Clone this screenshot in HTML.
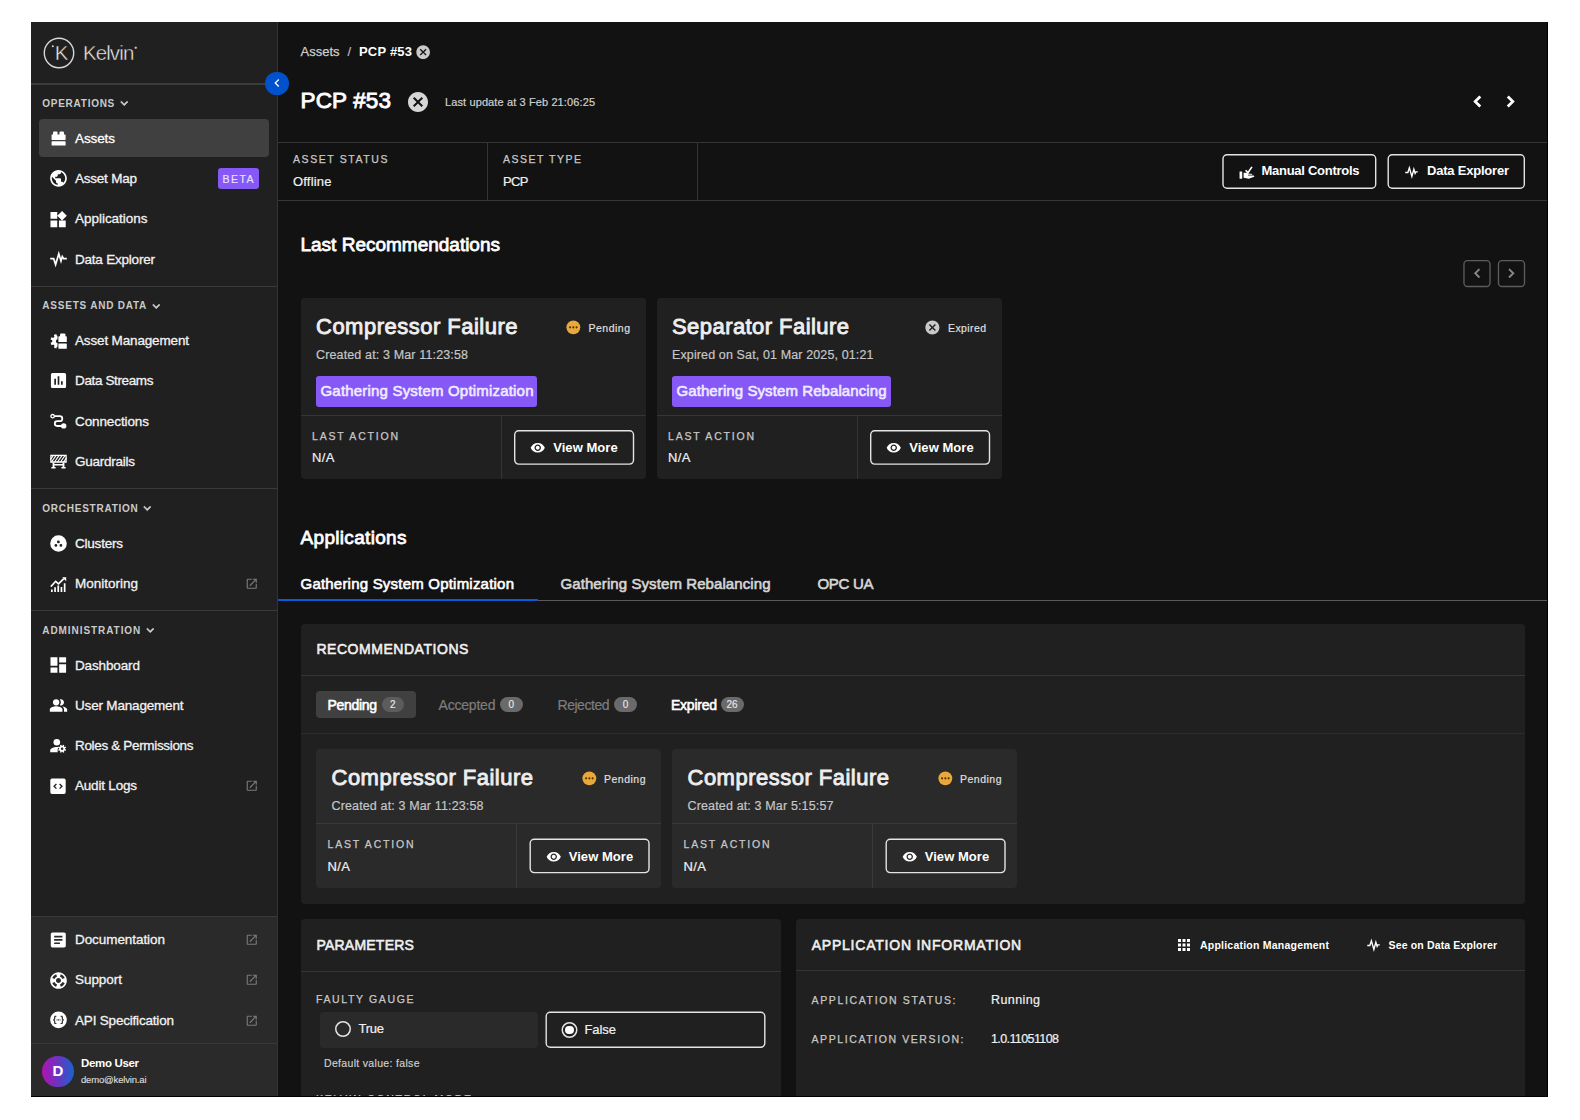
<!DOCTYPE html>
<html lang="en"><head><meta charset="utf-8"><title>PCP #53 - Kelvin</title><style>
html,body{margin:0;padding:0;background:#fff;}
body{width:1580px;height:1120px;overflow:hidden;position:relative;font-family:"Liberation Sans",sans-serif;}
#frame{position:absolute;left:31px;top:22px;width:1517px;height:1075px;background:#121212;overflow:hidden;}
.t{position:absolute;white-space:nowrap;display:block;}
.b{position:absolute;}
.i{position:absolute;display:block;overflow:visible;}
</style></head><body><div id="frame">
<div class="b" style="left:0.00px;top:0.00px;width:246.00px;height:1075.00px;background:#202020;"></div>
<div class="b" style="left:246.00px;top:0.00px;width:1.00px;height:1075.00px;background:#333;"></div>
<div class="b" style="left:0.00px;top:894.00px;width:246.00px;height:181.00px;background:#2a2a2a;"></div>
<div class="b" style="left:0.00px;top:894.00px;width:246.00px;height:1.00px;background:#3a3a3a;"></div>
<div class="b" style="left:0.00px;top:1021.00px;width:246.00px;height:1.00px;background:#3a3a3a;"></div>
<svg class="i" style="left:11px;top:14px;width:34px;height:34px" viewBox="0 0 34 34"><circle cx="17" cy="17" r="14.700" fill="none" stroke="#d8d8d8" stroke-width="1.400"/><circle cx="10.800" cy="10.200" r="1" fill="#d8d8d8"/><text x="12.700" y="24.200" font-size="20.500" fill="#ececec" stroke="#202020" stroke-width="0.450" font-family="Liberation Sans, sans-serif">K</text></svg>
<span class="t" id="t1" style="left:51.90px;top:17.70px;font-size:20.5px;line-height:26px;font-weight:400;color:#ececec;letter-spacing:-0.889px;-webkit-text-stroke:0.450px #202020;">Kelvin</span>
<span class="t" style="left:103px;top:22px;font-size:5px;line-height:6px;color:#ccc">&#9679;</span>
<div class="b" style="left:0.00px;top:60.50px;width:246.00px;height:2.00px;background:#3c3c3c;"></div>
<div class="b" style="left:234.30px;top:49.70px;width:23.40px;height:23.40px;background:#0052cc;border-radius:50%;z-index:5"></div>
<svg class="i" style="left:237.50px;top:53.40px;width:16.00px;height:16.00px;color:#fff;z-index:6" viewBox="0 0 24 24" fill="currentColor"><path d="M15.41 7.41L14 6l-6 6 6 6 1.41-1.41L10.83 12z" /></svg>
<span class="t" id="t2" style="left:11.30px;top:74.90px;font-size:10px;line-height:14px;font-weight:700;color:#cacaca;letter-spacing:0.734px;">OPERATIONS</span>
<svg class="i" style="left:85.95px;top:74.45px;width:14.50px;height:14.50px;color:#d0d0d0;stroke:#d0d0d0;stroke-width:1.1px;" viewBox="0 0 24 24" fill="currentColor"><path d="M16.59 8.59L12 13.17 7.41 8.59 6 10l6 6 6-6z" /></svg>
<div class="b" style="left:7.50px;top:97.00px;width:230.50px;height:38.00px;background:#404040;border-radius:4px"></div>
<svg class="i" style="left:18.50px;top:107.50px;width:17px;height:17px;color:#fff;" viewBox="0 0 17 17" fill="currentColor"><rect x="3" y="1.500" width="4.500" height="4.500" rx="1.100"/><rect x="9.500" y="1.500" width="4.500" height="4.500" rx="1.100"/><rect x="1.600" y="4.400" width="14" height="5.500" rx="0.600"/><rect x="1.600" y="11.300" width="14" height="4.200" rx="0.600"/></svg>
<span class="t" id="t3" style="left:44.00px;top:107.00px;font-size:13.5px;line-height:20px;font-weight:400;color:#fff;letter-spacing:-0.103px;-webkit-text-stroke:0.300px #fff;">Assets</span>
<svg class="i" style="left:18.50px;top:148.00px;width:17px;height:17px;color:#fff;" viewBox="0 0 17 17" fill="currentColor"><g transform="translate(-1.500,-1.700) scale(0.8333)"><path d="M12 2C6.48 2 2 6.48 2 12s4.48 10 10 10 10-4.48 10-10S17.52 2 12 2zm-1 17.93c-3.95-.49-7-3.85-7-7.93 0-.62.08-1.21.21-1.79L9 15v1c0 1.1.9 2 2 2v1.93zm6.9-2.54c-.26-.81-1-1.39-1.9-1.39h-1v-3c0-.55-.45-1-1-1H8v-2h2c.55 0 1-.45 1-1V7h2c1.1 0 2-.9 2-2v-.41c2.93 1.19 5 4.06 5 7.41 0 2.08-.8 3.97-2.1 5.39z" /></g></svg>
<span class="t" id="t4" style="left:44.00px;top:146.90px;font-size:13.5px;line-height:20px;font-weight:400;color:#f2f2f2;letter-spacing:-0.223px;-webkit-text-stroke:0.300px #f2f2f2;">Asset Map</span>
<div class="b" style="left:187.00px;top:145.50px;width:41.00px;height:21.50px;background:#8659f7;border-radius:3px"></div>
<span class="t" id="t5" style="left:191.50px;top:149.50px;font-size:10.5px;line-height:14px;font-weight:400;color:#e9e0ff;letter-spacing:1.448px;-webkit-text-stroke:0.16px #e9e0ff;">BETA</span>
<svg class="i" style="left:18.50px;top:188.50px;width:17px;height:17px;color:#fff;" viewBox="0 0 17 17" fill="currentColor"><g transform="translate(-2.050,-1.550) scale(0.8458)"><path d="M13 13v8h8v-8h-8zM3 21h8v-8H3v8zM3 3v8h8V3H3zm13.66-1.31L11 7.34 16.66 13l5.66-5.66-5.66-5.65z" /></g></svg>
<span class="t" id="t6" style="left:44.00px;top:187.40px;font-size:13.5px;line-height:20px;font-weight:400;color:#f2f2f2;letter-spacing:-0.027px;-webkit-text-stroke:0.300px #f2f2f2;">Applications</span>
<svg class="i" style="left:18.50px;top:229.00px;width:17px;height:17px;color:#fff;" viewBox="0 0 17 17" fill="currentColor"><path d="M0.200 7.700H3.700L5.600 13.600 8.800 2.800 11 10 12.300 5.600 13.600 7.700H16.800" fill="none" stroke="currentColor" stroke-width="1.700" stroke-linejoin="miter" stroke-miterlimit="6"/></svg>
<span class="t" id="t7" style="left:44.00px;top:227.90px;font-size:13.5px;line-height:20px;font-weight:400;color:#f2f2f2;letter-spacing:-0.212px;-webkit-text-stroke:0.300px #f2f2f2;">Data Explorer</span>
<div class="b" style="left:0.00px;top:264.00px;width:246.00px;height:1.00px;background:#3a3a3a;"></div>
<span class="t" id="t8" style="left:11.30px;top:277.40px;font-size:10px;line-height:14px;font-weight:700;color:#cacaca;letter-spacing:0.775px;">ASSETS AND DATA</span>
<svg class="i" style="left:117.95px;top:276.95px;width:14.50px;height:14.50px;color:#d0d0d0;stroke:#d0d0d0;stroke-width:1.1px;" viewBox="0 0 24 24" fill="currentColor"><path d="M16.59 8.59L12 13.17 7.41 8.59 6 10l6 6 6-6z" /></svg>
<svg class="i" style="left:18.50px;top:310.50px;width:17px;height:17px;color:#fff;" viewBox="0 0 17 17" fill="currentColor"><clipPath id="cg"><rect x="0" y="0" width="7.500" height="17"/></clipPath><path clip-path="url(#cg)" fill-rule="evenodd" d="M15.03 9.79 L14.06 12.15 L12.34 11.48 L11.10 12.72 L11.78 14.44 L9.43 15.42 L8.69 13.73 L6.94 13.73 L6.21 15.43 L3.85 14.46 L4.52 12.74 L3.28 11.50 L1.56 12.18 L0.58 9.83 L2.27 9.09 L2.27 7.34 L0.57 6.61 L1.54 4.25 L3.26 4.92 L4.50 3.68 L3.82 1.96 L6.17 0.98 L6.91 2.67 L8.66 2.67 L9.39 0.97 L11.75 1.94 L11.08 3.66 L12.32 4.90 L14.04 4.22 L15.02 6.57 L13.33 7.31 L13.33 9.06Z M5.90 8.20 a1.90 1.90 0 1 0 3.80 0 a1.90 1.90 0 1 0 -3.80 0Z"/><rect x="10" y="0.600" width="5.400" height="4" rx="1"/><rect x="8.400" y="3.300" width="8.400" height="5.700" rx="0.600"/><rect x="8.400" y="10.400" width="8.400" height="5.400" rx="0.600"/></svg>
<span class="t" id="t9" style="left:44.00px;top:309.40px;font-size:13.5px;line-height:20px;font-weight:400;color:#f2f2f2;letter-spacing:-0.154px;-webkit-text-stroke:0.300px #f2f2f2;">Asset Management</span>
<svg class="i" style="left:18.50px;top:350.50px;width:17px;height:17px;color:#fff;" viewBox="0 0 17 17" fill="currentColor"><g transform="translate(-1.600,-2.600) scale(0.8417)"><path d="M19 3H5c-1.1 0-2 .9-2 2v14c0 1.1.9 2 2 2h14c1.1 0 2-.9 2-2V5c0-1.1-.9-2-2-2zM9 17H7v-7h2v7zm4 0h-2V7h2v10zm4 0h-2v-4h2v4z" /></g></svg>
<span class="t" id="t10" style="left:44.00px;top:349.40px;font-size:13.5px;line-height:20px;font-weight:400;color:#f2f2f2;letter-spacing:-0.366px;-webkit-text-stroke:0.300px #f2f2f2;">Data Streams</span>
<svg class="i" style="left:18.50px;top:391.00px;width:17px;height:17px;color:#fff;" viewBox="0 0 17 17" fill="currentColor"><circle cx="2.600" cy="3.200" r="1.700" fill="none" stroke="currentColor" stroke-width="1.300"/><circle cx="13.700" cy="12.900" r="2.700"/><path d="M4.300 3.200H9.800a2.500 2.500 0 0 1 0 5H7.200a2.400 2.400 0 0 0 0 4.800H12" fill="none" stroke="currentColor" stroke-width="1.800"/></svg>
<span class="t" id="t11" style="left:44.00px;top:389.90px;font-size:13.5px;line-height:20px;font-weight:400;color:#f2f2f2;letter-spacing:-0.106px;-webkit-text-stroke:0.300px #f2f2f2;">Connections</span>
<svg class="i" style="left:18.50px;top:431.00px;width:17px;height:17px;color:#fff;" viewBox="0 0 17 17" fill="currentColor"><path d="M0.900 2.300h15.200v6.700H0.900z" fill="none" stroke="currentColor" stroke-width="1.300"/><path d="M0.500 6.500l3-4.300M1.500 9l4.800-6.800M4.500 9l4.800-6.800M7.500 9l4.800-6.800M10.500 9l4.800-6.800M13.500 9l2.800-4" stroke="currentColor" stroke-width="1.150" fill="none"/><path d="M2.600 9.500h1.800v4.500h1.200v1.600H1.400V14h1.200zM12.600 9.500h1.800V14h1.200v1.600h-4.200V14h1.200zM4.400 11h8.200v1.600H4.400z"/></svg>
<span class="t" id="t12" style="left:44.00px;top:429.90px;font-size:13.5px;line-height:20px;font-weight:400;color:#f2f2f2;letter-spacing:-0.253px;-webkit-text-stroke:0.300px #f2f2f2;">Guardrails</span>
<div class="b" style="left:0.00px;top:466.00px;width:246.00px;height:1.00px;background:#3a3a3a;"></div>
<span class="t" id="t13" style="left:11.30px;top:479.90px;font-size:10px;line-height:14px;font-weight:700;color:#cacaca;letter-spacing:0.751px;">ORCHESTRATION</span>
<svg class="i" style="left:108.95px;top:479.45px;width:14.50px;height:14.50px;color:#d0d0d0;stroke:#d0d0d0;stroke-width:1.1px;" viewBox="0 0 24 24" fill="currentColor"><path d="M16.59 8.59L12 13.17 7.41 8.59 6 10l6 6 6-6z" /></svg>
<svg class="i" style="left:18.50px;top:513.00px;width:17px;height:17px;color:#fff;" viewBox="0 0 17 17" fill="currentColor"><path fill-rule="evenodd" d="M8.500 0.200a8.300 8.300 0 1 0 0 16.600 8.300 8.300 0 0 0 0-16.600zM8.400 5.500a1.400 1.400 0 1 1 0 2.800 1.400 1.400 0 0 1 0-2.800zM5.900 9a1.400 1.400 0 1 1 0 2.800 1.400 1.400 0 0 1 0-2.800zM10.900 9a1.400 1.400 0 1 1 0 2.800 1.400 1.400 0 0 1 0-2.800z"/></svg>
<span class="t" id="t14" style="left:44.00px;top:511.90px;font-size:13.5px;line-height:20px;font-weight:400;color:#f2f2f2;letter-spacing:-0.217px;-webkit-text-stroke:0.300px #f2f2f2;">Clusters</span>
<svg class="i" style="left:18.50px;top:553.50px;width:17px;height:17px;color:#fff;" viewBox="0 0 17 17" fill="currentColor"><path d="M1 15.900v-2.400h1.700v2.400zM4.200 15.900v-4.600h1.700v4.600zM7.400 15.900V9.500h1.700v6.400zM10.600 15.900v-4.900h1.700v4.900zM13.800 15.900V7.200h1.700v8.700z"/><path d="M0.800 10.600L5.700 5.300 8.500 7.900 13.800 2.600" fill="none" stroke="currentColor" stroke-width="1.600"/><path d="M12.200 1.300h4v4z"/></svg>
<span class="t" id="t15" style="left:44.00px;top:552.40px;font-size:13.5px;line-height:20px;font-weight:400;color:#f2f2f2;letter-spacing:-0.003px;-webkit-text-stroke:0.300px #f2f2f2;">Monitoring</span>
<svg class="i" style="left:213.75px;top:555.25px;width:13.50px;height:13.50px;color:#7a7a7a;" viewBox="0 0 24 24" fill="currentColor"><path d="M19 19H5V5h7V3H5c-1.11 0-2 .9-2 2v14c0 1.1.89 2 2 2h14c1.1 0 2-.9 2-2v-7h-2v7zM14 3v2h3.59l-9.83 9.83 1.41 1.41L19 6.41V10h2V3h-7z" /></svg>
<div class="b" style="left:0.00px;top:588.00px;width:246.00px;height:1.00px;background:#3a3a3a;"></div>
<span class="t" id="t16" style="left:11.30px;top:601.90px;font-size:10px;line-height:14px;font-weight:700;color:#cacaca;letter-spacing:0.929px;">ADMINISTRATION</span>
<svg class="i" style="left:111.95px;top:601.45px;width:14.50px;height:14.50px;color:#d0d0d0;stroke:#d0d0d0;stroke-width:1.1px;" viewBox="0 0 24 24" fill="currentColor"><path d="M16.59 8.59L12 13.17 7.41 8.59 6 10l6 6 6-6z" /></svg>
<svg class="i" style="left:18.50px;top:635.00px;width:17px;height:17px;color:#fff;" viewBox="0 0 17 17" fill="currentColor"><g transform="translate(-2.100,-2.400) scale(0.8667)"><path d="M3 13h8V3H3v10zm0 8h8v-6H3v6zm10 0h8V11h-8v10zm0-18v6h8V3h-8z" /></g></svg>
<span class="t" id="t17" style="left:44.00px;top:633.90px;font-size:13.5px;line-height:20px;font-weight:400;color:#f2f2f2;letter-spacing:-0.131px;-webkit-text-stroke:0.300px #f2f2f2;">Dashboard</span>
<svg class="i" style="left:18.50px;top:675.00px;width:17px;height:17px;color:#fff;" viewBox="0 0 17 17" fill="currentColor"><g transform="translate(-0.950,-0.950) scale(0.7875)"><path d="M16.670 13.130C18.040 14.060 19 15.320 19 17v3h4v-3c0-2.180-3.570-3.470-6.330-3.870z"/><path d="M15 12c2.210 0 4-1.790 4-4s-1.790-4-4-4c-.470 0-.910.100-1.330.240C14.500 5.270 15 6.580 15 8s-.5 2.730-1.330 3.760c.420.140.860.240 1.330.240z"/><circle cx="9" cy="8" r="4"/><path d="M9 13c-2.670 0-8 1.340-8 4v3h16v-3c0-2.660-5.330-4-8-4z"/></g></svg>
<span class="t" id="t18" style="left:44.00px;top:673.90px;font-size:13.5px;line-height:20px;font-weight:400;color:#f2f2f2;letter-spacing:-0.183px;-webkit-text-stroke:0.300px #f2f2f2;">User Management</span>
<svg class="i" style="left:18.50px;top:715.50px;width:17px;height:17px;color:#fff;" viewBox="0 0 17 17" fill="currentColor"><circle cx="6.800" cy="4.200" r="3.300"/><path d="M0.200 14.300v-1.700c0-2.400 3.600-3.700 6.600-3.700 .700 0 1.400.100 2 .200a5.500 5.500 0 0 0-1.200 5.200z"/><path fill-rule="evenodd" d="M16.10 11.58 L15.57 12.89 L14.53 12.46 L13.87 13.12 L14.31 14.16 L13.01 14.70 L12.58 13.66 L11.64 13.66 L11.22 14.70 L9.91 14.17 L10.34 13.13 L9.68 12.47 L8.64 12.91 L8.10 11.61 L9.14 11.18 L9.14 10.24 L8.10 9.82 L8.63 8.51 L9.67 8.94 L10.33 8.28 L9.89 7.24 L11.19 6.70 L11.62 7.74 L12.56 7.74 L12.98 6.70 L14.29 7.23 L13.86 8.27 L14.52 8.93 L15.56 8.49 L16.10 9.79 L15.06 10.22 L15.06 11.16Z M10.85 10.70 a1.25 1.25 0 1 0 2.50 0 a1.25 1.25 0 1 0 -2.50 0Z"/></svg>
<span class="t" id="t19" style="left:44.00px;top:714.40px;font-size:13.5px;line-height:20px;font-weight:400;color:#f2f2f2;letter-spacing:-0.336px;-webkit-text-stroke:0.300px #f2f2f2;">Roles &amp; Permissions</span>
<svg class="i" style="left:18.50px;top:755.50px;width:17px;height:17px;color:#fff;" viewBox="0 0 17 17" fill="currentColor"><g transform="translate(-2.250,-1.950) scale(0.8542)"><path fill-rule="evenodd" d="M5 3h14a2 2 0 0 1 2 2v14a2 2 0 0 1-2 2H5a2 2 0 0 1-2-2V5a2 2 0 0 1 2-2zm5.700 6.800L8.500 12l2.200 2.200-1.100 1.100L6.300 12l3.300-3.300zm2.600 0l1.100-1.100L17.700 12l-3.300 3.300-1.100-1.100 2.200-2.200z"/></g></svg>
<span class="t" id="t20" style="left:44.00px;top:754.40px;font-size:13.5px;line-height:20px;font-weight:400;color:#f2f2f2;letter-spacing:-0.200px;-webkit-text-stroke:0.300px #f2f2f2;">Audit Logs</span>
<svg class="i" style="left:213.75px;top:757.25px;width:13.50px;height:13.50px;color:#7a7a7a;" viewBox="0 0 24 24" fill="currentColor"><path d="M19 19H5V5h7V3H5c-1.11 0-2 .9-2 2v14c0 1.1.89 2 2 2h14c1.1 0 2-.9 2-2v-7h-2v7zM14 3v2h3.59l-9.83 9.83 1.41 1.41L19 6.41V10h2V3h-7z" /></svg>
<svg class="i" style="left:18.50px;top:909.50px;width:17px;height:17px;color:#fff;" viewBox="0 0 17 17" fill="currentColor"><g transform="translate(-1.700,-2.100) scale(0.8333)"><path d="M19 3H5c-1.1 0-2 .9-2 2v14c0 1.1.9 2 2 2h14c1.1 0 2-.9 2-2V5c0-1.1-.9-2-2-2zm-5 14H7v-2h7v2zm3-4H7v-2h10v2zm0-4H7V7h10v2z" /></g></svg>
<span class="t" id="t21" style="left:44.00px;top:908.40px;font-size:13.5px;line-height:20px;font-weight:400;color:#f2f2f2;letter-spacing:-0.068px;-webkit-text-stroke:0.300px #f2f2f2;">Documentation</span>
<svg class="i" style="left:213.75px;top:911.25px;width:13.50px;height:13.50px;color:#7a7a7a;" viewBox="0 0 24 24" fill="currentColor"><path d="M19 19H5V5h7V3H5c-1.11 0-2 .9-2 2v14c0 1.1.89 2 2 2h14c1.1 0 2-.9 2-2v-7h-2v7zM14 3v2h3.59l-9.83 9.83 1.41 1.41L19 6.41V10h2V3h-7z" /></svg>
<svg class="i" style="left:18.50px;top:949.50px;width:17px;height:17px;color:#fff;" viewBox="0 0 17 17" fill="currentColor"><g transform="translate(-1.500,-1.500) scale(0.8333)"><path d="M12 2C6.480 2 2 6.480 2 12s4.480 10 10 10 10-4.480 10-10S17.520 2 12 2zm7.460 7.120l-2.780 1.150c-.510-1.360-1.580-2.440-2.950-2.940l1.150-2.780c2.100.800 3.770 2.470 4.580 4.570zM12 15c-1.660 0-3-1.340-3-3s1.340-3 3-3 3 1.340 3 3-1.340 3-3 3zM9.130 4.540l1.170 2.780c-1.380.500-2.470 1.590-2.980 2.970L4.540 9.130c.810-2.110 2.480-3.780 4.590-4.590zM4.540 14.870l2.780-1.150c.510 1.380 1.590 2.460 2.970 2.960l-1.170 2.780c-2.100-.810-3.770-2.480-4.580-4.590zm10.340 4.590l-1.150-2.780c1.370-.510 2.450-1.590 2.950-2.970l2.780 1.170c-.810 2.100-2.480 3.770-4.580 4.580z" /></g></svg>
<span class="t" id="t22" style="left:44.00px;top:948.40px;font-size:13.5px;line-height:20px;font-weight:400;color:#f2f2f2;letter-spacing:-0.049px;-webkit-text-stroke:0.300px #f2f2f2;">Support</span>
<svg class="i" style="left:213.75px;top:951.25px;width:13.50px;height:13.50px;color:#7a7a7a;" viewBox="0 0 24 24" fill="currentColor"><path d="M19 19H5V5h7V3H5c-1.11 0-2 .9-2 2v14c0 1.1.89 2 2 2h14c1.1 0 2-.9 2-2v-7h-2v7zM14 3v2h3.59l-9.83 9.83 1.41 1.41L19 6.41V10h2V3h-7z" /></svg>
<svg class="i" style="left:18.50px;top:990.00px;width:17px;height:17px;color:#fff;" viewBox="0 0 17 17" fill="currentColor"><g transform="translate(-1.500,-2.100) scale(0.8333)"><path fill-rule="evenodd" d="M12 2a10 10 0 1 0 0 20 10 10 0 0 0 0-20zM9.500 7v1.300H8.700c-.400 0-.600.300-.600.700v1.600c0 .700-.400 1.200-1 1.400.600.200 1 .700 1 1.400V15c0 .400.200.700.600.700h.800V17H8.400c-1.100 0-1.700-.700-1.700-1.700v-1.700c0-.600-.400-.900-1-.900v-1.400c.600 0 1-.300 1-.900V8.700C6.700 7.700 7.300 7 8.400 7zm5 0h1.100c1.100 0 1.700.700 1.700 1.700v1.700c0 .600.400.900 1 .900v1.400c-.600 0-1 .300-1 .900v1.700c0 1-.600 1.700-1.700 1.700h-1.100v-1.300h.800c.400 0 .600-.300.600-.700v-1.600c0-.700.400-1.200 1-1.400-.600-.200-1-.700-1-1.400V9c0-.400-.200-.700-.600-.700h-.800zM9.700 11.300h1.100v1.400H9.700zm1.800 0h1.100v1.400h-1.100zm1.800 0h1.100v1.400h-1.100z"/></g></svg>
<span class="t" id="t23" style="left:44.00px;top:988.90px;font-size:13.5px;line-height:20px;font-weight:400;color:#f2f2f2;letter-spacing:-0.191px;-webkit-text-stroke:0.300px #f2f2f2;">API Specification</span>
<svg class="i" style="left:213.75px;top:991.75px;width:13.50px;height:13.50px;color:#7a7a7a;" viewBox="0 0 24 24" fill="currentColor"><path d="M19 19H5V5h7V3H5c-1.11 0-2 .9-2 2v14c0 1.1.89 2 2 2h14c1.1 0 2-.9 2-2v-7h-2v7zM14 3v2h3.59l-9.83 9.83 1.41 1.41L19 6.41V10h2V3h-7z" /></svg>
<div class="b" style="left:11.00px;top:1033.50px;width:31.50px;height:31.50px;border-radius:50%;background:linear-gradient(90deg,#b012b0 0%,#6a35c0 50%,#1a62cf 100%)"></div>
<span class="t" id="t24" style="left:21.50px;top:1038.70px;font-size:15px;line-height:20px;font-weight:700;color:#fff;">D</span>
<span class="t" id="t25" style="left:50.00px;top:1033.50px;font-size:11.5px;line-height:14px;font-weight:700;color:#fff;letter-spacing:-0.340px;">Demo User</span>
<span class="t" id="t26" style="left:50.00px;top:1051.50px;font-size:9.5px;line-height:12px;font-weight:400;color:#ddd;letter-spacing:-0.172px;-webkit-text-stroke:0.14px #ddd;">demo@kelvin.ai</span>
<span class="t" id="t27" style="left:269.50px;top:21.50px;font-size:13px;line-height:16px;font-weight:400;color:#cfcfcf;letter-spacing:-0.003px;-webkit-text-stroke:0.250px #cfcfcf;">Assets</span>
<span class="t" id="t28" style="left:316.50px;top:21.50px;font-size:13px;line-height:16px;font-weight:400;color:#bdbdbd;-webkit-text-stroke:0.20px #bdbdbd;">/</span>
<span class="t" id="t29" style="left:328.00px;top:21.50px;font-size:13px;line-height:16px;font-weight:700;color:#fff;letter-spacing:0.201px;">PCP #53</span>
<svg class="i" style="left:384.35px;top:21.55px;width:16.30px;height:16.30px;color:#c9c9c9;" viewBox="0 0 24 24" fill="currentColor"><path d="M12 2C6.47 2 2 6.47 2 12s4.47 10 10 10 10-4.47 10-10S17.53 2 12 2zm5 13.59L15.59 17 12 13.41 8.410 17 7 15.59 10.59 12 7 8.41 8.41 7 12 10.59 15.59 7 17 8.41 13.41 12 17 15.59z" /></svg>
<span class="t" id="t30" style="left:269.50px;top:65.00px;font-size:22.5px;line-height:28px;font-weight:400;color:#fff;letter-spacing:0.141px;-webkit-text-stroke:0.90px #fff;">PCP #53</span>
<svg class="i" style="left:375.00px;top:67.50px;width:24.00px;height:24.00px;color:#d6d6d6;" viewBox="0 0 24 24" fill="currentColor"><path d="M12 2C6.47 2 2 6.47 2 12s4.47 10 10 10 10-4.47 10-10S17.53 2 12 2zm5 13.59L15.59 17 12 13.41 8.410 17 7 15.59 10.59 12 7 8.41 8.41 7 12 10.59 15.59 7 17 8.41 13.41 12 17 15.59z" /></svg>
<span class="t" id="t31" style="left:414.00px;top:72.50px;font-size:11px;line-height:14px;font-weight:400;color:#cfcfcf;letter-spacing:0.115px;-webkit-text-stroke:0.200px #cfcfcf;">Last update at 3 Feb 21:06:25</span>
<svg class="i" style="left:1436.00px;top:69.00px;width:21.00px;height:21.00px;color:#fff;stroke:#fff;stroke-width:1.2px;" viewBox="0 0 24 24" fill="currentColor"><path d="M15.41 7.41L14 6l-6 6 6 6 1.41-1.41L10.83 12z" /></svg>
<svg class="i" style="left:1469.00px;top:69.00px;width:21.00px;height:21.00px;color:#fff;stroke:#fff;stroke-width:1.2px;" viewBox="0 0 24 24" fill="currentColor"><path d="M10 6L8.59 7.41 13.17 12l-4.58 4.59L10 18l6-6z" /></svg>
<div class="b" style="left:247.00px;top:120.00px;width:1270.00px;height:1.00px;background:#353535;"></div>
<div class="b" style="left:247.00px;top:177.50px;width:1270.00px;height:1.00px;background:#353535;"></div>
<div class="b" style="left:456.00px;top:120.00px;width:1.00px;height:58.00px;background:#353535;"></div>
<div class="b" style="left:666.00px;top:120.00px;width:1.00px;height:58.00px;background:#353535;"></div>
<span class="t" id="t32" style="left:262.00px;top:130.00px;font-size:10.5px;line-height:14px;font-weight:400;color:#c8c8c8;letter-spacing:1.588px;-webkit-text-stroke:0.250px #c8c8c8;">ASSET STATUS</span>
<span class="t" id="t33" style="left:262.00px;top:149.50px;font-size:13px;line-height:20px;font-weight:400;color:#f0f0f0;letter-spacing:0.193px;-webkit-text-stroke:0.20px #f0f0f0;">Offline</span>
<span class="t" id="t34" style="left:472.00px;top:130.00px;font-size:10.5px;line-height:14px;font-weight:400;color:#c8c8c8;letter-spacing:1.512px;-webkit-text-stroke:0.250px #c8c8c8;">ASSET TYPE</span>
<span class="t" id="t35" style="left:472.00px;top:149.50px;font-size:13px;line-height:20px;font-weight:400;color:#f0f0f0;letter-spacing:-0.617px;-webkit-text-stroke:0.20px #f0f0f0;">PCP</span>
<svg class="i" style="left:1190px;top:131px;width:158px;height:39px;" viewBox="0 0 158 39"><rect x="2.00" y="1.70" width="152.70" height="33.60" rx="4.00" fill="none" stroke="#e4e4e4" stroke-width="1.40"/></svg>
<svg class="i" style="left:1207.00px;top:139.80px;width:17.00px;height:17.00px;color:#fff;" viewBox="0 0 24 24" fill="currentColor"><g transform="translate(0.500,3.500) scale(1.4)"><rect x="1.200" y="7" width="2.700" height="7.300" rx="0.300"/><path d="M5.300 8.300h3.200l2.200 1h2.300q1.100 0 1.100 1.100h-4.300v0.700h5.300q1.200 0.100 1 1.300l-5.600 2-5.200-1.100z"/><path d="M7.300 5.800l2.400 2.400 4-5.800" fill="none" stroke="currentColor" stroke-width="1.700"/></g></svg>
<span class="t" id="t36" style="left:1230.50px;top:139.20px;font-size:13px;line-height:20px;font-weight:700;color:#fff;letter-spacing:-0.275px;">Manual Controls</span>
<svg class="i" style="left:1355px;top:131px;width:141px;height:39px;" viewBox="0 0 141 39"><rect x="2.20" y="1.70" width="136.10" height="33.60" rx="4.00" fill="none" stroke="#e4e4e4" stroke-width="1.40"/></svg>
<svg class="i" style="left:1373.00px;top:142.00px;width:15.00px;height:15.00px;color:#fff;" viewBox="0 0 24 24" fill="currentColor"><path d="M2 13.5h4.2L8.6 6l4 14 3.2-11.5 2 6.5 1.2-2.500H22" fill="none" stroke="currentColor" stroke-width="2.200" stroke-linejoin="miter" stroke-linecap="butt"/></svg>
<span class="t" id="t37" style="left:1396.00px;top:139.20px;font-size:13px;line-height:20px;font-weight:700;color:#fff;letter-spacing:-0.212px;">Data Explorer</span>
<span class="t" id="t38" style="left:269.50px;top:211.00px;font-size:19px;line-height:24px;font-weight:400;color:#fff;letter-spacing:-0.006px;-webkit-text-stroke:0.76px #fff;">Last Recommendations</span>
<svg class="i" style="left:1431px;top:237px;width:31px;height:31px;" viewBox="0 0 31 31"><rect x="1.97" y="1.68" width="26.05" height="25.85" rx="3.50" fill="none" stroke="#5c5c5c" stroke-width="1.35"/></svg>
<svg class="i" style="left:1465px;top:237px;width:31px;height:31px;" viewBox="0 0 31 31"><rect x="2.47" y="1.68" width="26.05" height="25.85" rx="3.50" fill="none" stroke="#5c5c5c" stroke-width="1.35"/></svg>
<svg class="i" style="left:1436.55px;top:242.25px;width:18.50px;height:18.50px;color:#8c8c8c;stroke:#8c8c8c;stroke-width:0.6px;" viewBox="0 0 24 24" fill="currentColor"><path d="M15.41 7.41L14 6l-6 6 6 6 1.41-1.41L10.83 12z" /></svg>
<svg class="i" style="left:1471.45px;top:242.25px;width:18.50px;height:18.50px;color:#8c8c8c;stroke:#8c8c8c;stroke-width:0.6px;" viewBox="0 0 24 24" fill="currentColor"><path d="M10 6L8.59 7.41 13.17 12l-4.58 4.59L10 18l6-6z" /></svg>
<div class="b" style="left:269.50px;top:276.00px;width:345.00px;height:180.50px;background:#202020;border-radius:4px"></div>
<span class="t" id="t39" style="left:285.00px;top:290.50px;font-size:22px;line-height:28px;font-weight:400;color:#eeeeee;letter-spacing:0.490px;-webkit-text-stroke:0.88px #eeeeee;">Compressor Failure</span>
<svg class="i" style="left:534.05px;top:296.95px;width:16.70px;height:16.70px;color:#e9a83a;" viewBox="0 0 24 24" fill="currentColor"><circle cx="12" cy="12" r="10"/><circle cx="7.300" cy="12" r="1.500" fill="#4a3000"/><circle cx="12" cy="12" r="1.500" fill="#4a3000"/><circle cx="16.700" cy="12" r="1.500" fill="#4a3000"/></svg>
<span class="t" id="t40" style="left:557.50px;top:298.50px;font-size:10.5px;line-height:14px;font-weight:400;color:#e0e0e0;letter-spacing:0.492px;-webkit-text-stroke:0.16px #e0e0e0;">Pending</span>
<span class="t" id="t41" style="left:285.00px;top:324.50px;font-size:12.5px;line-height:16px;font-weight:400;color:#c6c6c6;letter-spacing:0.141px;-webkit-text-stroke:0.19px #c6c6c6;">Created at: 3 Mar 11:23:58</span>
<div class="b" style="left:285.00px;top:354.00px;width:221.00px;height:30.50px;background:#8659f7;border-radius:3px"></div>
<span class="t" id="t42" style="left:289.50px;top:359.30px;font-size:15px;line-height:20px;font-weight:400;color:#f0ebff;letter-spacing:0.193px;-webkit-text-stroke:0.60px #f0ebff;">Gathering System Optimization</span>
<div class="b" style="left:269.50px;top:393.00px;width:345.00px;height:1.00px;background:#353535;"></div>
<div class="b" style="left:469.50px;top:393.00px;width:1.00px;height:63.50px;background:#353535;"></div>
<span class="t" id="t43" style="left:281.00px;top:406.50px;font-size:10.5px;line-height:14px;font-weight:400;color:#c8c8c8;letter-spacing:1.792px;-webkit-text-stroke:0.250px #c8c8c8;">LAST ACTION</span>
<span class="t" id="t44" style="left:281.00px;top:426.00px;font-size:13px;line-height:20px;font-weight:400;color:#f0f0f0;letter-spacing:0.414px;-webkit-text-stroke:0.20px #f0f0f0;">N/A</span>
<svg class="i" style="left:482px;top:407px;width:124px;height:38px;" viewBox="0 0 124 38"><rect x="1.70" y="1.70" width="118.80" height="33.40" rx="4.00" fill="none" stroke="#e4e4e4" stroke-width="1.40"/></svg>
<svg class="i" style="left:499.25px;top:418.25px;width:15.50px;height:15.50px;color:#fff;" viewBox="0 0 24 24" fill="currentColor"><path d="M12 4.5C7 4.5 2.73 7.61 1 12c1.73 4.39 6 7.5 11 7.5s9.27-3.11 11-7.5c-1.73-4.39-6-7.5-11-7.5zM12 17c-2.76 0-5-2.24-5-5s2.24-5 5-5 5 2.24 5 5-2.24 5-5 5zm0-8c-1.66 0-3 1.34-3 3s1.34 3 3 3 3-1.34 3-3-1.34-3-3-3z" /></svg>
<span class="t" id="t45" style="left:522.20px;top:416.00px;font-size:13px;line-height:20px;font-weight:700;color:#fff;letter-spacing:0.055px;">View More</span>
<div class="b" style="left:625.50px;top:276.00px;width:345.00px;height:180.50px;background:#202020;border-radius:4px"></div>
<span class="t" id="t46" style="left:641.00px;top:290.50px;font-size:22px;line-height:28px;font-weight:400;color:#eeeeee;letter-spacing:0.438px;-webkit-text-stroke:0.88px #eeeeee;">Separator Failure</span>
<svg class="i" style="left:893.10px;top:296.90px;width:16.80px;height:16.80px;color:#c9c9c9;" viewBox="0 0 24 24" fill="currentColor"><path d="M12 2C6.47 2 2 6.47 2 12s4.47 10 10 10 10-4.47 10-10S17.53 2 12 2zm5 13.59L15.59 17 12 13.41 8.410 17 7 15.59 10.59 12 7 8.41 8.41 7 12 10.59 15.59 7 17 8.41 13.41 12 17 15.59z" /></svg>
<span class="t" id="t47" style="left:917.00px;top:298.50px;font-size:10.5px;line-height:14px;font-weight:400;color:#e0e0e0;letter-spacing:0.398px;-webkit-text-stroke:0.16px #e0e0e0;">Expired</span>
<span class="t" id="t48" style="left:641.00px;top:324.50px;font-size:12.5px;line-height:16px;font-weight:400;color:#c6c6c6;letter-spacing:0.125px;-webkit-text-stroke:0.19px #c6c6c6;">Expired on Sat, 01 Mar 2025, 01:21</span>
<div class="b" style="left:641.00px;top:354.00px;width:218.50px;height:30.50px;background:#8659f7;border-radius:3px"></div>
<span class="t" id="t49" style="left:645.50px;top:359.30px;font-size:15px;line-height:20px;font-weight:400;color:#f0ebff;letter-spacing:0.088px;-webkit-text-stroke:0.60px #f0ebff;">Gathering System Rebalancing</span>
<div class="b" style="left:625.50px;top:393.00px;width:345.00px;height:1.00px;background:#353535;"></div>
<div class="b" style="left:825.50px;top:393.00px;width:1.00px;height:63.50px;background:#353535;"></div>
<span class="t" id="t50" style="left:637.00px;top:406.50px;font-size:10.5px;line-height:14px;font-weight:400;color:#c8c8c8;letter-spacing:1.792px;-webkit-text-stroke:0.250px #c8c8c8;">LAST ACTION</span>
<span class="t" id="t51" style="left:637.00px;top:426.00px;font-size:13px;line-height:20px;font-weight:400;color:#f0f0f0;letter-spacing:0.414px;-webkit-text-stroke:0.20px #f0f0f0;">N/A</span>
<svg class="i" style="left:838px;top:407px;width:124px;height:38px;" viewBox="0 0 124 38"><rect x="1.70" y="1.70" width="118.80" height="33.40" rx="4.00" fill="none" stroke="#e4e4e4" stroke-width="1.40"/></svg>
<svg class="i" style="left:855.25px;top:418.25px;width:15.50px;height:15.50px;color:#fff;" viewBox="0 0 24 24" fill="currentColor"><path d="M12 4.5C7 4.5 2.73 7.61 1 12c1.73 4.39 6 7.5 11 7.5s9.27-3.11 11-7.5c-1.73-4.39-6-7.5-11-7.5zM12 17c-2.76 0-5-2.24-5-5s2.24-5 5-5 5 2.24 5 5-2.24 5-5 5zm0-8c-1.66 0-3 1.34-3 3s1.34 3 3 3 3-1.34 3-3-1.34-3-3-3z" /></svg>
<span class="t" id="t52" style="left:878.20px;top:416.00px;font-size:13px;line-height:20px;font-weight:700;color:#fff;letter-spacing:0.055px;">View More</span>
<span class="t" id="t53" style="left:269.50px;top:504.00px;font-size:19px;line-height:24px;font-weight:400;color:#fff;letter-spacing:0.322px;-webkit-text-stroke:0.76px #fff;">Applications</span>
<span class="t" id="t54" style="left:269.50px;top:552.00px;font-size:15px;line-height:20px;font-weight:400;color:#fff;letter-spacing:0.211px;-webkit-text-stroke:0.60px #fff;">Gathering System Optimization</span>
<span class="t" id="t55" style="left:529.50px;top:552.00px;font-size:15px;line-height:20px;font-weight:400;color:#d6d6d6;letter-spacing:0.088px;-webkit-text-stroke:0.60px #d6d6d6;">Gathering System Rebalancing</span>
<span class="t" id="t56" style="left:786.50px;top:552.00px;font-size:15px;line-height:20px;font-weight:400;color:#d6d6d6;letter-spacing:-0.303px;-webkit-text-stroke:0.60px #d6d6d6;">OPC UA</span>
<div class="b" style="left:247.00px;top:577.50px;width:1270.00px;height:1.00px;background:#5a5a5a;"></div>
<div class="b" style="left:247.00px;top:576.50px;width:260.00px;height:2.00px;background:#0a5ad6;"></div>
<div class="b" style="left:269.50px;top:602.00px;width:1224.50px;height:280.00px;background:#202020;border-radius:4px"></div>
<span class="t" id="t57" style="left:285.40px;top:619.00px;font-size:14px;line-height:16px;font-weight:400;color:#f0f0f0;letter-spacing:0.541px;-webkit-text-stroke:0.56px #f0f0f0;">RECOMMENDATIONS</span>
<div class="b" style="left:269.50px;top:653.00px;width:1224.50px;height:1.00px;background:#353535;"></div>
<div class="b" style="left:285.00px;top:669.00px;width:100.00px;height:27.00px;background:#404040;border-radius:4px"></div>
<span class="t" id="t58" style="left:296.50px;top:672.50px;font-size:14px;line-height:20px;font-weight:400;color:#fff;letter-spacing:-0.315px;-webkit-text-stroke:0.56px #fff;">Pending</span>
<div class="b" style="left:350.50px;top:674.60px;width:22.50px;height:15.80px;background:#5c5c5c;border-radius:8px"></div>
<span class="t" id="t59" style="left:358.95px;top:676.60px;font-size:10px;line-height:12px;font-weight:400;color:#e8e8e8;-webkit-text-stroke:0.15px #e8e8e8;">2</span>
<span class="t" id="t60" style="left:407.50px;top:672.50px;font-size:14px;line-height:20px;font-weight:400;color:#7d7d7d;letter-spacing:-0.196px;-webkit-text-stroke:0.21px #7d7d7d;">Accepted</span>
<div class="b" style="left:468.50px;top:674.60px;width:23.50px;height:15.80px;background:#6a6a6a;border-radius:8px"></div>
<span class="t" id="t61" style="left:477.45px;top:676.60px;font-size:10px;line-height:12px;font-weight:400;color:#e8e8e8;-webkit-text-stroke:0.15px #e8e8e8;">0</span>
<span class="t" id="t62" style="left:526.50px;top:672.50px;font-size:14px;line-height:20px;font-weight:400;color:#7d7d7d;letter-spacing:-0.467px;-webkit-text-stroke:0.21px #7d7d7d;">Rejected</span>
<div class="b" style="left:583.00px;top:674.60px;width:23.00px;height:15.80px;background:#6a6a6a;border-radius:8px"></div>
<span class="t" id="t63" style="left:591.70px;top:676.60px;font-size:10px;line-height:12px;font-weight:400;color:#e8e8e8;-webkit-text-stroke:0.15px #e8e8e8;">0</span>
<span class="t" id="t64" style="left:640.00px;top:672.50px;font-size:14px;line-height:20px;font-weight:400;color:#fff;letter-spacing:-0.245px;-webkit-text-stroke:0.56px #fff;">Expired</span>
<div class="b" style="left:689.50px;top:674.60px;width:23.00px;height:15.80px;background:#6a6a6a;border-radius:8px"></div>
<span class="t" id="t65" style="left:695.40px;top:676.60px;font-size:10px;line-height:12px;font-weight:400;color:#e8e8e8;-webkit-text-stroke:0.15px #e8e8e8;">26</span>
<div class="b" style="left:269.50px;top:711.00px;width:1224.50px;height:1.00px;background:#2c2c2c;"></div>
<div class="b" style="left:285.00px;top:727.00px;width:345.00px;height:139.00px;background:#2a2a2a;border-radius:4px"></div>
<span class="t" id="t66" style="left:300.50px;top:741.50px;font-size:22px;line-height:28px;font-weight:400;color:#eeeeee;letter-spacing:0.490px;-webkit-text-stroke:0.88px #eeeeee;">Compressor Failure</span>
<svg class="i" style="left:549.55px;top:747.95px;width:16.70px;height:16.70px;color:#e9a83a;" viewBox="0 0 24 24" fill="currentColor"><circle cx="12" cy="12" r="10"/><circle cx="7.300" cy="12" r="1.500" fill="#4a3000"/><circle cx="12" cy="12" r="1.500" fill="#4a3000"/><circle cx="16.700" cy="12" r="1.500" fill="#4a3000"/></svg>
<span class="t" id="t67" style="left:573.00px;top:749.50px;font-size:10.5px;line-height:14px;font-weight:400;color:#e0e0e0;letter-spacing:0.492px;-webkit-text-stroke:0.16px #e0e0e0;">Pending</span>
<span class="t" id="t68" style="left:300.50px;top:775.50px;font-size:12.5px;line-height:16px;font-weight:400;color:#c6c6c6;letter-spacing:0.141px;-webkit-text-stroke:0.19px #c6c6c6;">Created at: 3 Mar 11:23:58</span>
<div class="b" style="left:285.00px;top:801.00px;width:345.00px;height:1.00px;background:#3a3a3a;"></div>
<div class="b" style="left:485.00px;top:801.00px;width:1.00px;height:65.00px;background:#3a3a3a;"></div>
<span class="t" id="t69" style="left:296.50px;top:815.00px;font-size:10.5px;line-height:14px;font-weight:400;color:#c8c8c8;letter-spacing:1.792px;-webkit-text-stroke:0.250px #c8c8c8;">LAST ACTION</span>
<span class="t" id="t70" style="left:296.50px;top:834.50px;font-size:13px;line-height:20px;font-weight:400;color:#f0f0f0;letter-spacing:0.414px;-webkit-text-stroke:0.20px #f0f0f0;">N/A</span>
<svg class="i" style="left:497px;top:815px;width:124px;height:38px;" viewBox="0 0 124 38"><rect x="2.20" y="2.20" width="118.80" height="33.40" rx="4.00" fill="none" stroke="#e4e4e4" stroke-width="1.40"/></svg>
<svg class="i" style="left:514.75px;top:826.75px;width:15.50px;height:15.50px;color:#fff;" viewBox="0 0 24 24" fill="currentColor"><path d="M12 4.5C7 4.5 2.73 7.61 1 12c1.73 4.39 6 7.5 11 7.5s9.27-3.11 11-7.5c-1.73-4.39-6-7.5-11-7.5zM12 17c-2.76 0-5-2.24-5-5s2.24-5 5-5 5 2.24 5 5-2.24 5-5 5zm0-8c-1.66 0-3 1.34-3 3s1.34 3 3 3 3-1.34 3-3-1.34-3-3-3z" /></svg>
<span class="t" id="t71" style="left:537.70px;top:824.50px;font-size:13px;line-height:20px;font-weight:700;color:#fff;letter-spacing:0.055px;">View More</span>
<div class="b" style="left:641.00px;top:727.00px;width:345.00px;height:139.00px;background:#2a2a2a;border-radius:4px"></div>
<span class="t" id="t72" style="left:656.50px;top:741.50px;font-size:22px;line-height:28px;font-weight:400;color:#eeeeee;letter-spacing:0.490px;-webkit-text-stroke:0.88px #eeeeee;">Compressor Failure</span>
<svg class="i" style="left:905.55px;top:747.95px;width:16.70px;height:16.70px;color:#e9a83a;" viewBox="0 0 24 24" fill="currentColor"><circle cx="12" cy="12" r="10"/><circle cx="7.300" cy="12" r="1.500" fill="#4a3000"/><circle cx="12" cy="12" r="1.500" fill="#4a3000"/><circle cx="16.700" cy="12" r="1.500" fill="#4a3000"/></svg>
<span class="t" id="t73" style="left:929.00px;top:749.50px;font-size:10.5px;line-height:14px;font-weight:400;color:#e0e0e0;letter-spacing:0.492px;-webkit-text-stroke:0.16px #e0e0e0;">Pending</span>
<span class="t" id="t74" style="left:656.50px;top:775.50px;font-size:12.5px;line-height:16px;font-weight:400;color:#c6c6c6;letter-spacing:0.148px;-webkit-text-stroke:0.19px #c6c6c6;">Created at: 3 Mar 5:15:57</span>
<div class="b" style="left:641.00px;top:801.00px;width:345.00px;height:1.00px;background:#3a3a3a;"></div>
<div class="b" style="left:841.00px;top:801.00px;width:1.00px;height:65.00px;background:#3a3a3a;"></div>
<span class="t" id="t75" style="left:652.50px;top:815.00px;font-size:10.5px;line-height:14px;font-weight:400;color:#c8c8c8;letter-spacing:1.792px;-webkit-text-stroke:0.250px #c8c8c8;">LAST ACTION</span>
<span class="t" id="t76" style="left:652.50px;top:834.50px;font-size:13px;line-height:20px;font-weight:400;color:#f0f0f0;letter-spacing:0.414px;-webkit-text-stroke:0.20px #f0f0f0;">N/A</span>
<svg class="i" style="left:853px;top:815px;width:124px;height:38px;" viewBox="0 0 124 38"><rect x="2.20" y="2.20" width="118.80" height="33.40" rx="4.00" fill="none" stroke="#e4e4e4" stroke-width="1.40"/></svg>
<svg class="i" style="left:870.75px;top:826.75px;width:15.50px;height:15.50px;color:#fff;" viewBox="0 0 24 24" fill="currentColor"><path d="M12 4.5C7 4.5 2.73 7.61 1 12c1.73 4.39 6 7.5 11 7.5s9.27-3.11 11-7.5c-1.73-4.39-6-7.5-11-7.5zM12 17c-2.76 0-5-2.24-5-5s2.24-5 5-5 5 2.24 5 5-2.24 5-5 5zm0-8c-1.66 0-3 1.34-3 3s1.34 3 3 3 3-1.34 3-3-1.34-3-3-3z" /></svg>
<span class="t" id="t77" style="left:893.70px;top:824.50px;font-size:13px;line-height:20px;font-weight:700;color:#fff;letter-spacing:0.055px;">View More</span>
<div class="b" style="left:269.50px;top:897.00px;width:480.00px;height:191.00px;background:#202020;border-radius:4px"></div>
<span class="t" id="t78" style="left:285.40px;top:914.50px;font-size:14px;line-height:16px;font-weight:400;color:#f0f0f0;letter-spacing:0.229px;-webkit-text-stroke:0.56px #f0f0f0;">PARAMETERS</span>
<div class="b" style="left:269.50px;top:948.50px;width:480.00px;height:1.00px;background:#353535;"></div>
<span class="t" id="t79" style="left:285.00px;top:970.00px;font-size:10.5px;line-height:14px;font-weight:400;color:#c8c8c8;letter-spacing:1.631px;-webkit-text-stroke:0.250px #c8c8c8;">FAULTY GAUGE</span>
<div class="b" style="left:289.00px;top:990.00px;width:217.50px;height:36.00px;background:#2a2a2a;border-radius:4px"></div>
<svg class="i" style="left:303px;top:998px;width:20px;height:20px;" viewBox="0 0 20 20"><rect x="1.75" y="1.75" width="14.50" height="14.50" rx="8.00" fill="none" stroke="#e4e4e4" stroke-width="1.50"/></svg>
<span class="t" id="t80" style="left:327.50px;top:997.00px;font-size:13px;line-height:20px;font-weight:400;color:#f0f0f0;letter-spacing:-0.250px;-webkit-text-stroke:0.20px #f0f0f0;">True</span>
<svg class="i" style="left:513px;top:988px;width:224px;height:40px;" viewBox="0 0 224 40"><rect x="2.20" y="2.20" width="218.60" height="35.10" rx="4.00" fill="none" stroke="#e4e4e4" stroke-width="1.40"/></svg>
<svg class="i" style="left:529px;top:999px;width:20px;height:20px;" viewBox="0 0 20 20"><rect x="2.25" y="1.75" width="14.50" height="14.50" rx="8.00" fill="none" stroke="#e4e4e4" stroke-width="1.50"/></svg>
<div class="b" style="left:534.20px;top:1003.70px;width:8.60px;height:8.60px;background:#fff;border-radius:50%"></div>
<span class="t" id="t81" style="left:553.50px;top:998.00px;font-size:13px;line-height:20px;font-weight:400;color:#f0f0f0;letter-spacing:-0.074px;-webkit-text-stroke:0.20px #f0f0f0;">False</span>
<span class="t" id="t82" style="left:293.00px;top:1033.50px;font-size:10.5px;line-height:14px;font-weight:400;color:#d0d0d0;letter-spacing:0.326px;-webkit-text-stroke:0.16px #d0d0d0;">Default value: false</span>
<span class="t" id="t83" style="left:285.00px;top:1070.00px;font-size:10.5px;line-height:14px;font-weight:400;color:#c8c8c8;letter-spacing:1.674px;-webkit-text-stroke:0.250px #c8c8c8;">KELVIN CONTROL MODE</span>
<div class="b" style="left:765.00px;top:897.00px;width:729.00px;height:191.00px;background:#202020;border-radius:4px"></div>
<span class="t" id="t84" style="left:780.70px;top:914.50px;font-size:14px;line-height:16px;font-weight:400;color:#f0f0f0;letter-spacing:0.778px;-webkit-text-stroke:0.56px #f0f0f0;">APPLICATION INFORMATION</span>
<svg class="i" style="left:1144.00px;top:913.50px;width:18.00px;height:18.00px;color:#fff;" viewBox="0 0 24 24" fill="currentColor"><path d="M4 8h4V4H4v4zm6 12h4v-4h-4v4zm-6 0h4v-4H4v4zm0-6h4v-4H4v4zm6 0h4v-4h-4v4zm6-10v4h4V4h-4zm-6 4h4V4h-4v4zm6 6h4v-4h-4v4zm0 6h4v-4h-4v4z" /></svg>
<span class="t" id="t85" style="left:1169.00px;top:915.50px;font-size:10.5px;line-height:14px;font-weight:700;color:#fff;letter-spacing:0.225px;">Application Management</span>
<svg class="i" style="left:1334.50px;top:915.00px;width:15.00px;height:15.00px;color:#fff;" viewBox="0 0 24 24" fill="currentColor"><path d="M2 13.5h4.2L8.6 6l4 14 3.2-11.5 2 6.5 1.2-2.500H22" fill="none" stroke="currentColor" stroke-width="2.200" stroke-linejoin="miter" stroke-linecap="butt"/></svg>
<span class="t" id="t86" style="left:1357.50px;top:915.50px;font-size:10.5px;line-height:14px;font-weight:700;color:#fff;letter-spacing:0.151px;">See on Data Explorer</span>
<div class="b" style="left:765.00px;top:947.50px;width:729.00px;height:1.00px;background:#353535;"></div>
<span class="t" id="t87" style="left:780.50px;top:971.00px;font-size:10.5px;line-height:14px;font-weight:400;color:#c8c8c8;letter-spacing:1.647px;-webkit-text-stroke:0.250px #c8c8c8;">APPLICATION STATUS:</span>
<span class="t" id="t88" style="left:960.00px;top:967.50px;font-size:12.5px;line-height:20px;font-weight:400;color:#f0f0f0;letter-spacing:0.404px;-webkit-text-stroke:0.19px #f0f0f0;">Running</span>
<span class="t" id="t89" style="left:780.50px;top:1010.00px;font-size:10.5px;line-height:14px;font-weight:400;color:#c8c8c8;letter-spacing:1.592px;-webkit-text-stroke:0.250px #c8c8c8;">APPLICATION VERSION:</span>
<span class="t" id="t90" style="left:960.00px;top:1006.50px;font-size:12.5px;line-height:20px;font-weight:400;color:#f0f0f0;letter-spacing:-0.601px;-webkit-text-stroke:0.19px #f0f0f0;">1.0.11051108</span>
<div class="b" style="left:1516.00px;top:0.00px;width:1.00px;height:1075.00px;background:#000;"></div>
<div class="b" style="left:0.00px;top:1074.00px;width:1517.00px;height:1.00px;background:#000;"></div>
</div></body></html>
